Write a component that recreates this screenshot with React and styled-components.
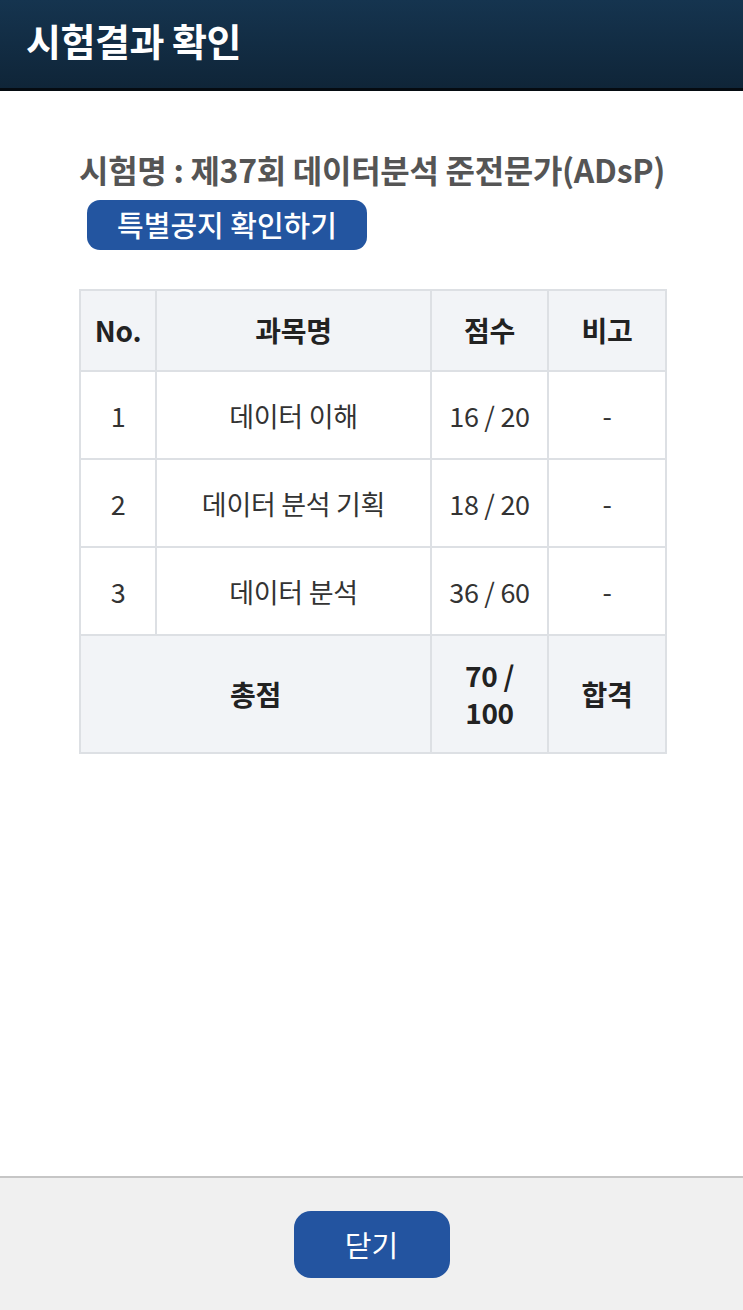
import React from 'react';
import styled, { createGlobalStyle } from 'styled-components';

const GlobalStyle = createGlobalStyle`
  html, body {
    margin: 0;
    padding: 0;
    background: #ffffff;
  }
  body {
    font-family: 'Noto Sans CJK KR', 'Noto Sans', sans-serif;
  }
  * {
    box-sizing: border-box;
  }
`;

const Page = styled.div`
  width: 743px;
  height: 1310px;
  display: flex;
  flex-direction: column;
  overflow: hidden;
`;

const Header = styled.header`
  height: 91px;
  flex-shrink: 0;
  display: flex;
  align-items: center;
  padding: 0 0 8px 26px;
  background: linear-gradient(180deg, #15344f 0%, #0f2538 100%);
  border-bottom: 3px solid #050b11;
`;

const Title = styled.h1`
  margin: 0;
  color: #ffffff;
  font-size: 38px;
  font-weight: 700;
  letter-spacing: -0.5px;
  line-height: 1;
`;

const Main = styled.main`
  flex: 1;
  padding: 56px 0 0 79px;
`;

const ExamName = styled.h2`
  margin: 0;
  color: #555555;
  font-size: 32px;
  font-weight: 700;
  letter-spacing: -0.3px;
  line-height: 44px;
`;

const NoticeButton = styled.button`
  display: block;
  margin: 9px 0 0 8px;
  width: 280px;
  height: 50px;
  padding: 0 0 2px;
  border: none;
  border-radius: 13px;
  background: #2355a0;
  color: #ffffff;
  font-family: inherit;
  font-size: 29px;
  font-weight: 500;
`;

const Table = styled.table`
  margin-top: 39px;
  width: 586px;
  border-collapse: collapse;
  table-layout: fixed;
  border: 2px solid #dde0e4;
`;

const Cell = styled.td`
  border: 2px solid #dde0e4;
  text-align: center;
  vertical-align: middle;
  height: ${p => p.$h || 88}px;
  padding: 0 6px;
  font-size: ${p => (p.$head ? 28 : 27)}px;
  font-weight: ${p => (p.$head ? 700 : 400)};
  color: ${p => (p.$head ? '#222222' : '#333333')};
  background: ${p => (p.$head ? '#f2f4f7' : '#ffffff')};
  letter-spacing: -0.3px;
  line-height: 37px;
`;

const Footer = styled.footer`
  height: 134px;
  flex-shrink: 0;
  display: flex;
  align-items: center;
  justify-content: center;
  background: #f0f0f0;
  border-top: 2px solid #c6c6c6;
`;

const CloseButton = styled.button`
  width: 156px;
  height: 67px;
  border: none;
  border-radius: 17px;
  background: #2354a0;
  color: #ffffff;
  font-family: inherit;
  font-size: 29px;
  font-weight: 400;
`;

const rows = [
  { no: 1, name: '데이터 이해', score: '16 / 20' },
  { no: 2, name: '데이터 분석 기획', score: '18 / 20' },
  { no: 3, name: '데이터 분석', score: '36 / 60' },
];

export default function App() {
  return (
    <Page>
      <GlobalStyle />
      <Header>
        <Title>시험결과 확인</Title>
      </Header>
      <Main>
        <ExamName>시험명 : 제37회 데이터분석 준전문가(ADsP)</ExamName>
        <NoticeButton>특별공지 확인하기</NoticeButton>
        <Table>
          <colgroup>
            <col style={{ width: 76 }} />
            <col style={{ width: 275 }} />
            <col style={{ width: 117 }} />
            <col style={{ width: 118 }} />
          </colgroup>
          <thead>
            <tr>
              <Cell as="th" $head $h={81}>No.</Cell>
              <Cell as="th" $head $h={81}>과목명</Cell>
              <Cell as="th" $head $h={81}>점수</Cell>
              <Cell as="th" $head $h={81}>비고</Cell>
            </tr>
          </thead>
          <tbody>
            {rows.map(r => (
              <tr key={r.no}>
                <Cell>{r.no}</Cell>
                <Cell>{r.name}</Cell>
                <Cell>{r.score}</Cell>
                <Cell>-</Cell>
              </tr>
            ))}
            <tr>
              <Cell colSpan={2} $head $h={118}>총점</Cell>
              <Cell $head $h={118}>
                70 /<br />100
              </Cell>
              <Cell $head $h={118}>합격</Cell>
            </tr>
          </tbody>
        </Table>
      </Main>
      <Footer>
        <CloseButton>닫기</CloseButton>
      </Footer>
    </Page>
  );
}
